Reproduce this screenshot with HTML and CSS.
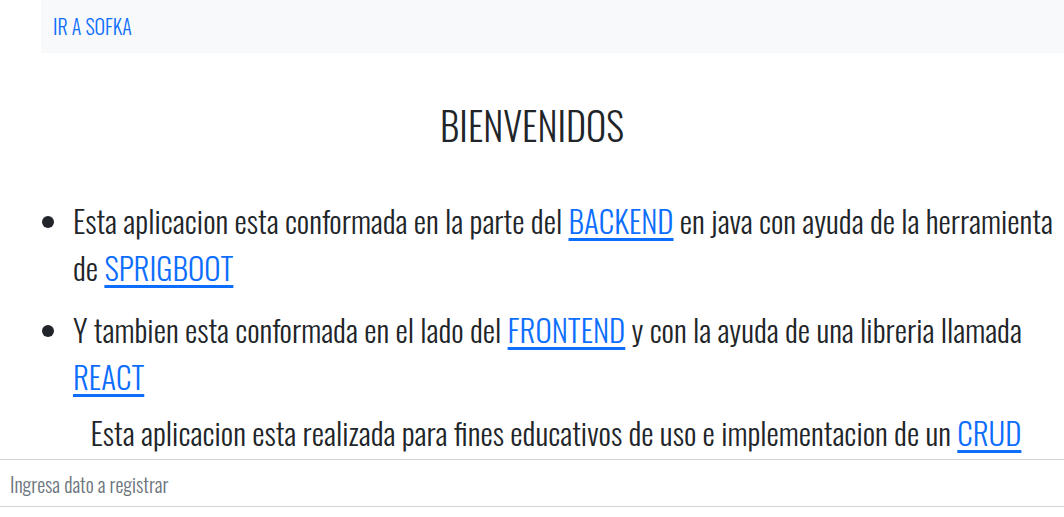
FILE: index.html
```html
<!DOCTYPE html>
<html lang="es">
<head>
<meta charset="utf-8">
<title>Sofka CRUD</title>
<link rel="stylesheet" href="styles.css">
</head>
<body>
<nav class="navbar">
  <a class="nav-link" href="#">IR A SOFKA</a>
</nav>
<main class="content">
  <h1 class="title">BIENVENIDOS</h1>
  <ul class="features">
    <li>Esta aplicacion esta conformada en la parte del <a href="#">BACKEND</a> en java con ayuda de la herramienta de <a href="#">SPRIGBOOT</a></li>
    <li>Y tambien esta conformada en el lado del <a href="#">FRONTEND</a> y con la ayuda de una libreria llamada <a href="#">REACT</a></li>
  </ul>
  <p class="note">Esta aplicacion esta realizada para fines educativos de uso e implementacion de un <a href="#">CRUD</a></p>
</main>
<form class="entry">
  <input class="entry-input" type="text" placeholder="Ingresa dato a registrar">
</form>
</body>
</html>
```
FILE: styles.css
```css
html, body {
  margin: 0;
  padding: 0;
  background: #fff;
}
body {
  font-family: "Oswald", "Roboto Condensed", "DejaVu Sans Condensed", sans-serif;
  font-weight: 300;
  color: #212529;
  overflow: hidden;
}
.navbar {
  margin-left: 41px;
  height: 53px;
  background: #f8f9fa;
  display: flex;
  align-items: center;
  padding: 0 0 2px 12px;
  box-sizing: border-box;
}
.nav-link {
  color: #0d6efd;
  text-decoration: none;
  font-size: 20px;
  font-weight: 300;
}
.title {
  margin: 48px 0 0;
  text-align: center;
  font-weight: 300;
  font-size: 38.5px;
  line-height: 48px;
}
.features {
  margin: 48px 0 0;
  padding-left: 73px;
  font-size: 31px;
  line-height: 47px;
}
.features li {
  margin-bottom: 15px;
}
.features li:last-child {
  margin-bottom: 9px;
}
a {
  color: #0d6efd;
  font-weight: inherit;
}
.features a,
.note a {
  text-decoration-thickness: 3px;
  text-underline-offset: 4px;
}
.note {
  margin: 0 0 3px;
  padding-left: 48px;
  text-align: center;
  font-size: 31px;
  line-height: 47px;
}
.entry {
  margin: 0;
}
.entry-input {
  display: block;
  width: 100%;
  box-sizing: border-box;
  height: 48px;
  margin: 0;
  border: 0;
  border-top: 1px solid #ced4da;
  border-bottom: 1px solid #ced4da;
  padding: 2px 10px 0;
  font-family: inherit;
  font-weight: 300;
  font-size: 20px;
  color: #212529;
  outline: none;
}
.entry-input::placeholder {
  color: #6c757d;
}
```
